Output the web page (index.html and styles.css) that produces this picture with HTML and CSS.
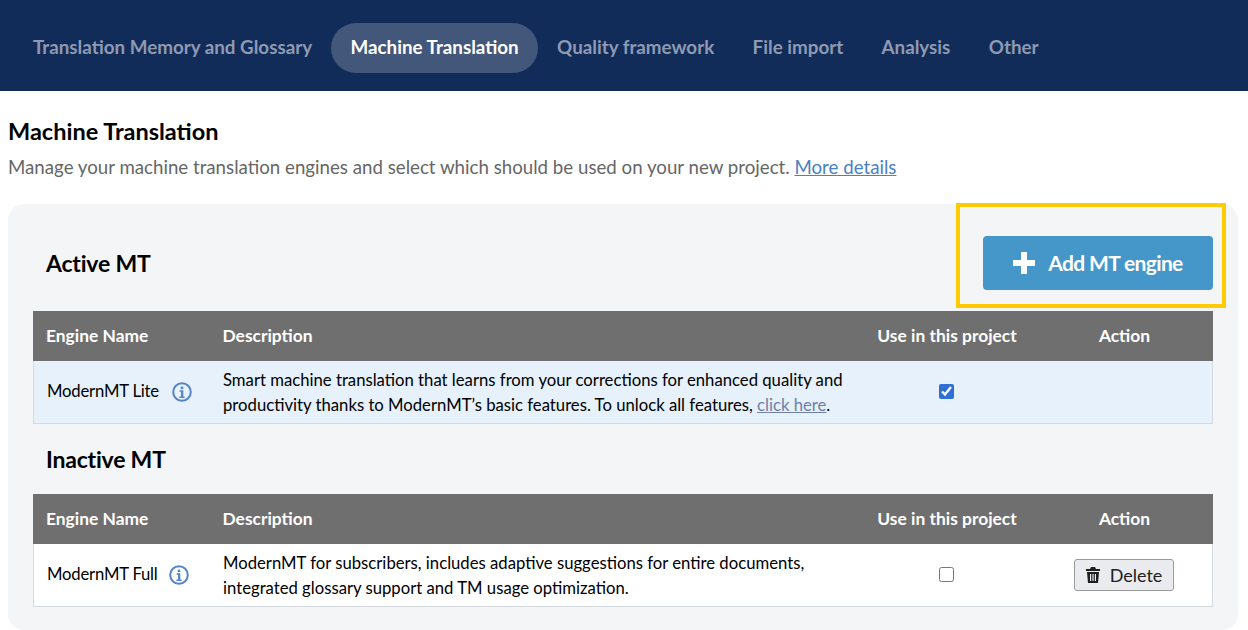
FILE: index.html
```
<!DOCTYPE html>
<html lang="en">
<head>
<meta charset="utf-8">
<title>Machine Translation</title>
<link rel="stylesheet" href="styles.css">
</head>
<body>
<nav class="tabs">
  <a class="tab">Translation Memory and Glossary</a>
  <a class="tab tab-active">Machine Translation</a>
  <a class="tab">Quality framework</a>
  <a class="tab">File import</a>
  <a class="tab">Analysis</a>
  <a class="tab">Other</a>
</nav>
<main class="content">
  <h1 class="title">Machine Translation</h1>
  <p class="subtitle">Manage your machine translation engines and select which should be used on your new project. <a class="link-blue">More details</a></p>
  <section class="panel">
    <div class="panel-head">
      <h2 class="section-title">Active MT</h2>
      <div class="add-wrap">
        <button class="add-btn">
          <svg class="plus" viewBox="0 0 22 22" width="22" height="22"><path d="M8 0h6v8h8v6h-8v8H8v-8H0V8h8z" fill="#fff"/></svg>
          <span class="add-label">Add MT engine</span>
        </button>
        <div class="highlight"></div>
      </div>
    </div>
    <div class="table">
      <div class="row head-row">
        <div class="c-name">Engine Name</div>
        <div class="c-desc">Description</div>
        <div class="c-use">Use in this project</div>
        <div class="c-act">Action</div>
      </div>
      <div class="row body-row active-row">
        <div class="c-name name-cell"><span class="engine lite">ModernMT Lite</span>
          <svg class="info" viewBox="0 0 20 20" width="20" height="20"><circle cx="10" cy="10" r="8.800" fill="none" stroke="#5585c6" stroke-width="2"/><circle cx="10" cy="5.900" r="1.400" fill="#5585c6"/><path d="M7.600 8.300h3.700v6.100h1.300v1.500H7.400v-1.500h1.600V9.800H7.600z" fill="#5585c6"/></svg>
        </div>
        <div class="c-desc">Smart machine translation that learns from your corrections for enhanced quality and productivity thanks to ModernMT’s basic features. To unlock all features, <a class="link-muted">click here</a>.</div>
        <div class="c-use"><input class="check" type="checkbox" checked></div>
        <div class="c-act"></div>
      </div>
    </div>
    <h2 class="section-title inactive-title">Inactive MT</h2>
    <div class="table">
      <div class="row head-row">
        <div class="c-name">Engine Name</div>
        <div class="c-desc">Description</div>
        <div class="c-use">Use in this project</div>
        <div class="c-act">Action</div>
      </div>
      <div class="row body-row">
        <div class="c-name name-cell"><span class="engine full">ModernMT Full</span>
          <svg class="info" viewBox="0 0 20 20" width="20" height="20"><circle cx="10" cy="10" r="8.800" fill="none" stroke="#5585c6" stroke-width="2"/><circle cx="10" cy="5.900" r="1.400" fill="#5585c6"/><path d="M7.600 8.300h3.700v6.100h1.300v1.500H7.400v-1.500h1.600V9.800H7.600z" fill="#5585c6"/></svg>
        </div>
        <div class="c-desc">ModernMT for subscribers, includes adaptive suggestions for entire documents, integrated glossary support and TM usage optimization.</div>
        <div class="c-use"><input class="check" type="checkbox"></div>
        <div class="c-act">
          <button class="del-btn">
            <svg class="trash" viewBox="0 0 14 16" width="14" height="16"><path d="M5 0h4l1 2h4v2H0V2h4zM1 5h12l-1 11H2zM4 7v7h1.200V7zM6.400 7v7h1.200V7zM8.800 7v7H10V7z" fill="#1f1f1f" fill-rule="evenodd"/></svg>
            <span>Delete</span>
          </button>
        </div>
      </div>
    </div>
  </section>
</main>
</body>
</html>
```
FILE: styles.css
```
* { box-sizing: border-box; }
html, body { margin: 0; padding: 0; }
body {
  background: #fff;
  font-family: "Lato", "Liberation Sans", sans-serif;
  color: #000;
  overflow: hidden;
}
.tabs {
  height: 91px;
  background: #122c5a;
  display: flex;
  align-items: flex-start;
  padding: 23px 13.800px 0;
}
.tab {
  height: 50px;
  line-height: 48px;
  padding: 0 19.200px;
  border-radius: 25px;
  color: #8e9ab2;
  font-size: 18.800px;
  font-weight: 700;
  white-space: nowrap;
}
.tab-active {
  background: #425779;
  color: #fff;
}
.content { padding: 0 10px 0 8px; }
.title {
  margin: 27px 0 0;
  font-size: 23.500px;
  line-height: 27px;
  font-weight: 700;
}
.subtitle {
  margin: 10px 0 0;
  font-size: 18.700px;
  line-height: 24px;
  color: #666;
  white-space: nowrap;
}
.link-blue { color: #4a80c4; text-decoration: underline; }
.panel {
  margin-top: 25px;
  background: #f4f5f7;
  border-radius: 16px;
  padding: 32px 25px 23px;
  height: 426px;
}
.panel-head {
  display: flex;
  justify-content: space-between;
  align-items: center;
  height: 54px;
  margin-bottom: 21px;
}
.section-title {
  margin: 0 0 1px;
  padding-left: 13px;
  font-size: 23px;
  line-height: 28px;
  font-weight: 700;
  letter-spacing: -0.200px;
}
.inactive-title { margin: 21px 0 21px; }
.add-wrap { position: relative; }
.add-btn {
  width: 230px;
  height: 54px;
  border: 0;
  border-radius: 4px;
  background: #4596c9;
  color: #fff;
  font: 700 21px "Lato", sans-serif;
  letter-spacing: -0.650px;
  display: flex;
  align-items: center;
  justify-content: center;
  gap: 13px;
  padding: 0;
}
.add-label { padding-bottom: 2px; }
.highlight {
  position: absolute;
  left: -27px;
  top: -33px;
  width: 270px;
  height: 105px;
  border: 4px solid #fecb00;
}
.table { width: 1180px; }
.row { display: flex; }
.head-row {
  height: 50px;
  background: #6f6f6f;
  color: #fff;
  font-size: 17.400px;
  font-weight: 700;
  align-items: center;
  padding-bottom: 2px;
}
.body-row {
  height: 63px;
  background: #fff;
  border: 1px solid #d5d9e0;
  border-top: 0;
  align-items: center;
  font-size: 16.700px;
  line-height: 25px;
}
.active-row { background: #e6f1fb; }
.c-name { width: 177px; padding-left: 13px; flex: none; }
.c-desc { width: 625px; flex: none; margin-left: 13px; }
.body-row .c-desc { padding-top: 2px; }
.head-row .c-desc { margin-left: 12.500px; }
.head-row .c-use { padding-right: 1px; }
.head-row .c-act { padding-left: 2px; }
.c-use { width: 200px; flex: none; text-align: center; }
.body-row .c-use { display: flex; justify-content: center; }
.c-act { width: 152px; flex: none; display: flex; justify-content: center; }
.body-row .c-name { width: 176px; padding-left: 13px; }
.name-cell { display: flex; align-items: center; }
.engine { letter-spacing: -0.200px; padding-bottom: 1px; }
.lite { margin-right: 13px; }
.full { margin-right: 11px; }
.info { flex: none; }
.link-muted { color: #6f80a8; text-decoration: underline; }
.check {
  width: 15px;
  height: 15px;
  margin: 0 3px 1px 0;
  accent-color: #2f6fd6;
}
.del-btn {
  width: 100px;
  height: 32px;
  background: #e9ebef;
  border: 1px solid #9b9b9b;
  border-radius: 3px;
  color: #222;
  font: 400 18px "Lato", sans-serif;
  display: flex;
  align-items: center;
  justify-content: center;
  gap: 10px;
  padding: 0;
}
```
